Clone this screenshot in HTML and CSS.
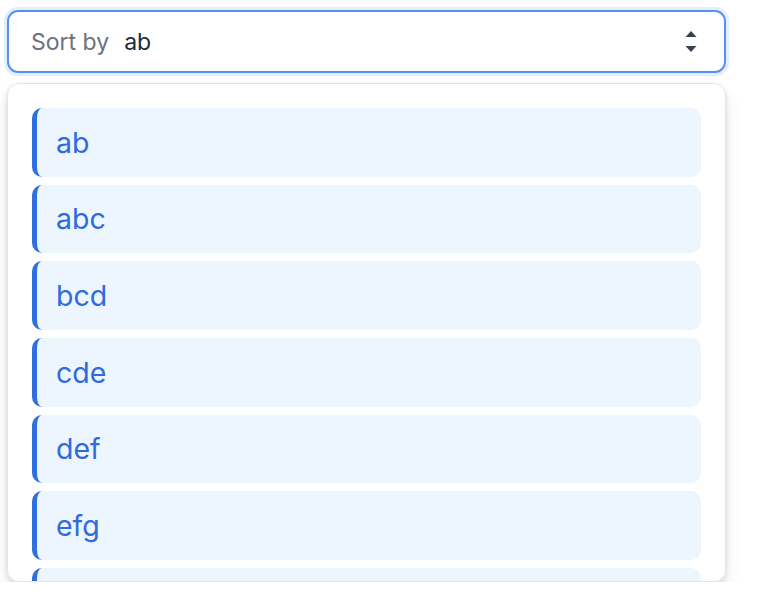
FILE: index.html
```html
<!DOCTYPE html>
<html>
<head>
<meta charset="utf-8">
<link rel="stylesheet" href="styles.css">
</head>
<body>
<div class="wrap">
  <div class="select">
    <span class="label">Sort by</span>
    <span class="value">ab</span>
    <svg class="chev" width="12" height="22" viewBox="0 0 12 22">
      <path d="M6 0 L11.5 6 L0.5 6 Z" fill="#374151"/>
      <path d="M0.5 15 L11.5 15 L6 21 Z" fill="#374151"/>
    </svg>
  </div>
  <div class="panel">
    <div class="list">
      <div class="item">ab</div>
      <div class="item">abc</div>
      <div class="item">bcd</div>
      <div class="item">cde</div>
      <div class="item">def</div>
      <div class="item">efg</div>
      <div class="item"></div>
    </div>
  </div>
</div>
</body>
</html>
```
FILE: styles.css
```css
html, body {
  margin: 0;
  padding: 0;
  background: #ffffff;
  font-family: Inter, "Liberation Sans", sans-serif;
}
.wrap {
  padding: 10px 0 0 7px;
  width: 719px;
  display: flex;
  flex-direction: column;
  gap: 10px;
}
.select {
  box-sizing: border-box;
  height: 63px;
  border: 2px solid #5591f5;
  border-radius: 11px;
  box-shadow: 0 0 0 3px #e4edfc;
  display: flex;
  align-items: center;
  padding: 0 27px 0 22px;
  font-size: 23px;
}
.label {
  color: #6b7280;
  margin-right: 15px;
}
.value {
  color: #1f2937;
  flex: 1;
}
.chev {
  display: block;
  margin-top: 1px;
}
.panel {
  box-sizing: border-box;
  height: 499px;
  border: 1px solid #e3e5ea;
  border-radius: 12px;
  box-shadow: 0 10px 20px -2px rgba(0,0,0,0.10), 0 2px 5px rgba(0,0,0,0.12);
  overflow: hidden;
  padding: 24px 24px 0 24px;
}
.list {
  display: flex;
  flex-direction: column;
  gap: 8px;
}
.item {
  box-sizing: border-box;
  flex: 0 0 68.67px;
  height: 68.67px;
  background: #edf5ff;
  border-left: 5px solid #2f6fdf;
  border-radius: 10px;
  display: flex;
  align-items: center;
  padding-left: 19px;
  font-size: 28.5px;
  color: #2f6bdc;
}
```
